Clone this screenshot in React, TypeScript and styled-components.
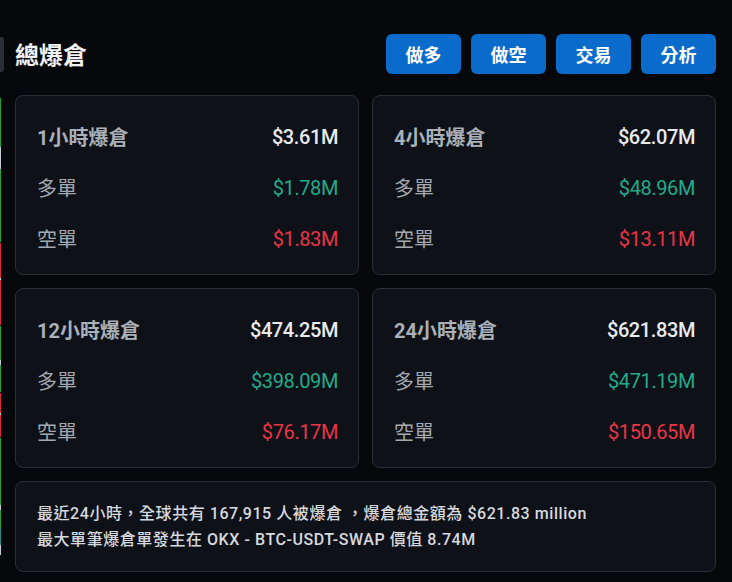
import React from "react";
import styled, { createGlobalStyle } from "styled-components";

const Global = createGlobalStyle`
  html, body { margin: 0; padding: 0; background: #06080c; }
  body {
    font-family: Roboto, "Noto Sans CJK TC", "Noto Sans", sans-serif;
    color: #eaecef;
    -webkit-font-smoothing: antialiased;
  }
`;

const Page = styled.div`
  position: relative;
  width: 732px;
  height: 582px;
  box-sizing: border-box;
  padding: 34px 16px 0 15px;
  overflow: hidden;
`;

const Header = styled.div`
  display: flex;
  align-items: center;
  justify-content: space-between;
  height: 40px;
`;

const Title = styled.h1`
  margin: 0;
  font-size: 24px;
  font-weight: 700;
  color: #f1f2f4;
  font-family: "Noto Sans CJK TC", sans-serif;
  line-height: 40px;
`;

const Buttons = styled.div`
  display: flex;
  gap: 10px;
`;

const Btn = styled.button`
  width: 75px;
  height: 40px;
  border: none;
  border-radius: 6px;
  background: #0b6bcb;
  color: #ffffff;
  font-family: "Noto Sans CJK TC", sans-serif;
  font-size: 18px;
  font-weight: 700;
  padding: 0;
  cursor: pointer;
`;

const Grid = styled.div`
  display: grid;
  grid-template-columns: 1fr 1fr;
  grid-auto-rows: 180px;
  gap: 13px;
  margin-top: 21px;
`;

const Card = styled.div`
  box-sizing: border-box;
  background: #0e1117;
  border: 1px solid #2a2e35;
  border-radius: 8px;
  padding: 15px 20px 8px 21px;
  display: flex;
  flex-direction: column;
`;

const Row = styled.div`
  height: 51px;
  display: flex;
  align-items: center;
  justify-content: space-between;
`;

const Label = styled.span<{ $head?: boolean }>`
  font-family: Roboto, "Noto Sans CJK TC", sans-serif;
  font-size: 20px;
  font-weight: ${(p) => (p.$head ? 700 : 400)};
  color: ${(p) => (p.$head ? "#aab0b8" : "#a3a8b0")};
`;

const Value = styled.span<{ $tone: "head" | "up" | "down" }>`
  font-family: Roboto, sans-serif;
  font-size: 20px;
  letter-spacing: -0.4px;
  font-weight: ${(p) => (p.$tone === "head" ? 500 : 400)};
  color: ${(p) =>
    p.$tone === "head" ? "#e8eaed" : p.$tone === "up" ? "#22ab8a" : "#ea3547"};
`;

const Summary = styled.div`
  box-sizing: border-box;
  margin-top: 13px;
  height: 91px;
  background: #0e1117;
  border: 1px solid #2a2e35;
  border-radius: 8px;
  padding: 19px 21px 0 21px;
  font-family: Roboto, "Noto Sans CJK TC", sans-serif;
  font-size: 16px;
  font-weight: 500;
  letter-spacing: 0.55px;
  line-height: 26px;
  color: #d6d9de;
`;

const EdgeStrip = styled.svg`
  position: absolute;
  left: 0;
  top: 0;
`;

const segments: [number, number, string][] = [
  [98, 147, "#1f9d3f"],
  [147, 169, "#c9ccd2"],
  [169, 242, "#1f9d3f"],
  [243, 278, "#d6283c"],
  [278, 280, "#c9ccd2"],
  [280, 325, "#d6283c"],
  [326, 360, "#1f9d3f"],
  [360, 365, "#c9ccd2"],
  [365, 392, "#1f9d3f"],
  [393, 413, "#d6283c"],
  [413, 415, "#c9ccd2"],
  [415, 437, "#d6283c"],
  [438, 505, "#1f9d3f"],
  [505, 510, "#c9ccd2"],
  [510, 528, "#1f9d3f"],
  [528, 545, "#1f8a8a"],
  [545, 555, "#c9ccd2"],
];

type Stat = { label: string; total: string; long: string; short: string };

const stats: Stat[] = [
  { label: "1小時爆倉", total: "$3.61M", long: "$1.78M", short: "$1.83M" },
  { label: "4小時爆倉", total: "$62.07M", long: "$48.96M", short: "$13.11M" },
  { label: "12小時爆倉", total: "$474.25M", long: "$398.09M", short: "$76.17M" },
  { label: "24小時爆倉", total: "$621.83M", long: "$471.19M", short: "$150.65M" },
];

export default function App() {
  return (
    <>
      <Global />
      <Page>
        <EdgeStrip width="5" height="582" viewBox="0 0 5 582">
          <rect x="-4" y="37" width="8" height="35" rx="3" fill="#2b2e34" />
          {segments.map(([a, b, c], i) => (
            <rect key={i} x="0" y={a} width="1" height={b - a} fill={c} />
          ))}
        </EdgeStrip>
        <Header>
          <Title>總爆倉</Title>
          <Buttons>
            <Btn>做多</Btn>
            <Btn>做空</Btn>
            <Btn>交易</Btn>
            <Btn>分析</Btn>
          </Buttons>
        </Header>
        <Grid>
          {stats.map((s) => (
            <Card key={s.label}>
              <Row>
                <Label $head>{s.label}</Label>
                <Value $tone="head">{s.total}</Value>
              </Row>
              <Row>
                <Label>多單</Label>
                <Value $tone="up">{s.long}</Value>
              </Row>
              <Row>
                <Label>空單</Label>
                <Value $tone="down">{s.short}</Value>
              </Row>
            </Card>
          ))}
        </Grid>
        <Summary>
          <div>最近24小時，全球共有 167,915 人被爆倉 ，爆倉總金額為 $621.83 million</div>
          <div>最大單筆爆倉單發生在 OKX - BTC-USDT-SWAP 價值 8.74M</div>
        </Summary>
      </Page>
    </>
  );
}
